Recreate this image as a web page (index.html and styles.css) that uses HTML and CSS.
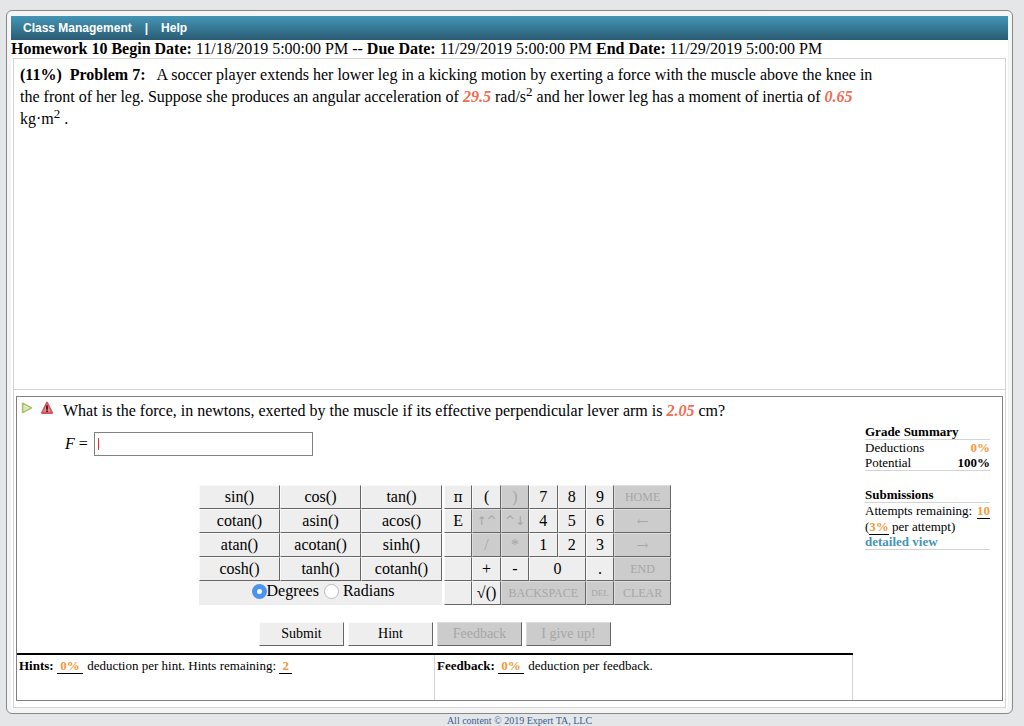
FILE: index.html
```html
<!DOCTYPE html>
<html lang="en">
<head>
<meta charset="UTF-8">
<title>Homework 10</title>
<link rel="stylesheet" href="styles.css">
</head>
<body>
<div class="shell">
	<nav class="menu">
		<a href="#">Class Management</a>
		<span>|</span>
		<a href="#">Help</a>
	</nav>
	<div class="content">
		<div class="dates"><b>Homework 10 Begin Date:</b> 11/18/2019 5:00:00 PM -- <b>Due Date:</b> 11/29/2019 5:00:00 PM <b>End Date:</b> 11/29/2019 5:00:00 PM</div>
		<div class="frame">
			<div class="problem">
				<b>(11%)&nbsp; Problem 7:</b> &nbsp; A soccer player extends her lower leg in a kicking motion by exerting a force with the muscle above the knee in the front of her leg. Suppose she produces an angular acceleration of <b class="var">29.5</b> rad/s<sup>2</sup> and her lower leg has a moment of inertia of <b class="var">0.65</b> kg&middot;m<sup>2</sup> .
			</div>
			<div class="part">
				<div class="work">
					<div class="question">
						<svg class="icon" width="12" height="14" viewBox="0 0 12 14">
							<path d="M1.5 2.2 L10.6 6.8 L1.5 11.6 Z" fill="#d5e6a4" stroke="#a3bf72" stroke-width="1.4" stroke-linejoin="round"/>
							<path d="M3 4.4 L7.6 6.8 L3 9.2" fill="none" stroke="#e6f0c0" stroke-width="1"/>
						</svg>
						<svg class="icon" width="14" height="14" viewBox="0 0 14 14">
							<path d="M6 1.5 L11.2 12 H0.9 Z" fill="#de6466" stroke="#d0585c" stroke-width="1.8" stroke-linejoin="round"/>
							<path d="M6 3 L9.6 10.6 H2.4 Z" fill="#e79391"/>
							<rect x="5" y="4.4" width="2" height="4.4" fill="#5a1e22"/>
							<rect x="5" y="9.4" width="2" height="1.6" fill="#5a1e22"/>
						</svg>
						<span>What is the force, in newtons, exerted by the muscle if its effective perpendicular lever arm is <b class="var">2.05</b> cm?</span>
					</div>
					<div class="answer">
						<label for="answer"><i>F</i> =</label>
						<input type="text" id="answer">
					</div>
					<div class="pads">
						<div class="functions">
							<button type="button">sin()</button>
							<button type="button">cos()</button>
							<button type="button">tan()</button>
							<button type="button">cotan()</button>
							<button type="button">asin()</button>
							<button type="button">acos()</button>
							<button type="button">atan()</button>
							<button type="button">acotan()</button>
							<button type="button">sinh()</button>
							<button type="button">cosh()</button>
							<button type="button">tanh()</button>
							<button type="button">cotanh()</button>
							<div class="units">
								<input type="radio" name="unit" id="degrees" checked><label for="degrees">Degrees</label>
								<input type="radio" name="unit" id="radians"><label class="radians" for="radians">Radians</label>
							</div>
						</div>
						<div class="numbers">
							<button type="button" class="symbol">&pi;</button>
							<button type="button">(</button>
							<button type="button" disabled>)</button>
							<button type="button">7</button>
							<button type="button">8</button>
							<button type="button">9</button>
							<button type="button" class="small" disabled>HOME</button>
							<button type="button">E</button>
							<button type="button" class="arrow" disabled>&uarr;^</button>
							<button type="button" class="arrow" disabled>^&darr;</button>
							<button type="button">4</button>
							<button type="button">5</button>
							<button type="button">6</button>
							<button type="button" class="symbol" disabled>&larr;</button>
							<button type="button" aria-label="blank"></button>
							<button type="button" disabled>/</button>
							<button type="button" disabled>*</button>
							<button type="button">1</button>
							<button type="button">2</button>
							<button type="button">3</button>
							<button type="button" class="symbol" disabled>&rarr;</button>
							<button type="button" aria-label="blank"></button>
							<button type="button">+</button>
							<button type="button">-</button>
							<button type="button" class="span2">0</button>
							<button type="button">.</button>
							<button type="button" class="small" disabled>END</button>
							<button type="button" aria-label="blank"></button>
							<button type="button">&radic;()</button>
							<button type="button" class="small span3" disabled>BACKSPACE</button>
							<button type="button" class="tiny" disabled>DEL</button>
							<button type="button" class="small" disabled>CLEAR</button>
						</div>
					</div>
					<div class="actions">
						<button type="button">Submit</button>
						<button type="button">Hint</button>
						<button type="button" disabled>Feedback</button>
						<button type="button" disabled>I give up!</button>
					</div>
					<div class="help">
						<div><b>Hints:</b> <b class="value">&nbsp;0%&nbsp;</b> deduction per hint. Hints remaining: <b class="value">&nbsp;2&nbsp;</b></div>
						<div><b>Feedback:</b> <b class="value">&nbsp;0%&nbsp;</b> deduction per feedback.</div>
					</div>
				</div>
				<div class="summary">
					<h3>Grade Summary</h3>
					<div class="rows">
						<div class="row"><span>Deductions</span><b class="score">0%</b></div>
						<div class="row"><span>Potential</span><b>100%</b></div>
					</div>
					<h3>Submissions</h3>
					<div class="rows">
						<div class="row"><span>Attempts remaining:</span><b class="value">10</b></div>
						<div>(<b class="value">3%</b> per attempt)</div>
						<a href="#">detailed view</a>
					</div>
				</div>
			</div>
		</div>
	</div>
</div>
<footer>All content &copy; 2019 Expert TA, LLC</footer>
</body>
</html>
```
FILE: styles.css
```css
* {
    box-sizing: border-box;
}
body {
    margin: 0;
    padding: 10px 11px 0 6px;
    background: #e5e6e8;
    color: #000;
    font-family: "Liberation Serif", "Times New Roman", serif;
    font-size: 16px;
}
.shell {
    padding: 5px 4px;
    background: #f5f5f5;
    border: 1px solid #888;
    border-radius: 6px;
}
.menu {
    display: flex;
    align-items: center;
    gap: 13px;
    height: 24px;
    padding: 0 12px;
    background: linear-gradient(#4496b6, #2a5b73);
    color: #fff;
    font: bold 12px "Liberation Sans", Arial, sans-serif;
}
.menu a {
    color: #fff;
    text-decoration: none;
}
.content {
    padding: 0 2px;
    background: #fff;
}
.dates {
    margin-left: -2px;
    line-height: 18px;
}
.frame {
    border: 1px solid #d4d4d4;
}
.problem {
    min-height: 331px;
    padding: 5px 112px 0 6px;
    border-bottom: 1px solid #d4d4d4;
    line-height: 22px;
}
sup {
    line-height: 12px;
    font-size: 13px;
    vertical-align: 6px;
}
.var {
    color: #f26a4f;
    font-style: italic;
}
.part {
    display: flex;
    margin: 6px 2px;
    border: 1px solid #808080;
}
.work {
    flex: 1;
    display: flex;
    flex-direction: column;
}
.question {
    display: flex;
    align-items: flex-start;
    gap: 8px;
    padding: 4px 4px 0;
    line-height: 20px;
}
.answer {
    display: flex;
    align-items: center;
    gap: 6px;
    margin-top: 11px;
    padding-left: 48px;
}
.answer input {
    width: 219px;
    height: 24px;
    padding: 0 6px;
    border: 1px solid #808080;
    background: linear-gradient(#f22, #f22) 3px center / 1px 12px no-repeat #fff;
    font: inherit;
    caret-color: #f22;
    outline: none;
}
button {
    padding: 0;
    background: #eee;
    border: 1px solid #fafafa;
    border-right-color: #666;
    border-bottom-color: #666;
    color: #000;
    font: inherit;
    white-space: nowrap;
}
button:disabled {
    background: #ccc;
    border-top-color: #ddd;
    border-left-color: #ddd;
    color: #a6a6a6;
}
.pads {
    display: flex;
    justify-content: center;
    gap: 2px;
    margin-top: 29px;
}
.functions, .numbers {
    display: grid;
    grid-auto-rows: 24px;
}
.functions {
    grid-template-columns: repeat(3, 1fr);
    width: 243px;
    background: #eee;
}
.numbers {
    grid-template-columns: repeat(6, 1fr) 2fr;
    width: 227px;
}
.numbers button {
    min-width: 0;
}
.span2 {
    grid-column: span 2;
}
.span3 {
    grid-column: span 3;
}
.small {
    font-size: 12px;
}
.tiny {
    font-size: 9px;
}
.symbol {
    font-family: "DejaVu Serif", serif;
    font-size: 14px;
}
.arrow {
    font-family: "DejaVu Sans", sans-serif;
    font-size: 12px;
}
.units {
    grid-column: span 3;
    display: flex;
    align-items: flex-start;
    justify-content: center;
    line-height: 20px;
}
.units input {
    appearance: none;
    width: 15px;
    height: 15px;
    margin: 3px 0 0 5px;
    border: 1px solid #bbb;
    border-radius: 50%;
    background: #fff;
}
.units input:checked {
    border: 5px solid #4a94f0;
}
.radians {
    margin-left: 4px;
}
.actions {
    display: flex;
    justify-content: center;
    gap: 4px;
    margin: 17px 0 7px;
    font-size: 14px;
}
.actions button {
    width: 85px;
    height: 24px;
}
.help {
    flex: 1;
    display: flex;
    min-height: 47px;
    border-top: 2px solid #000;
    font-size: 13px;
}
.help div {
    flex: 1;
    padding: 3px 2px;
    border-right: 1px solid #d4d4d4;
}
.help .value {
    margin-right: 1px;
}
.value {
    border-bottom: 1px solid #000;
    color: #f39a3c;
}
.score {
    color: #f39a3c;
}
.summary {
    width: 149px;
    padding: 27px 12px 0;
    font-size: 13px;
    line-height: 15px;
}
.summary h3 {
    margin: 0;
    border-bottom: 1px solid #d4d4d4;
    font-size: 13px;
}
.rows {
    margin-bottom: 16px;
    border-bottom: 1px solid #d4d4d4;
}
.row {
    display: flex;
    justify-content: space-between;
}
.summary a {
    color: #4595b5;
    font-weight: bold;
    text-decoration: none;
}
footer {
    padding-left: 20px;
    color: #365f91;
    font-size: 10px;
    line-height: 14px;
    text-align: center;
}
```
